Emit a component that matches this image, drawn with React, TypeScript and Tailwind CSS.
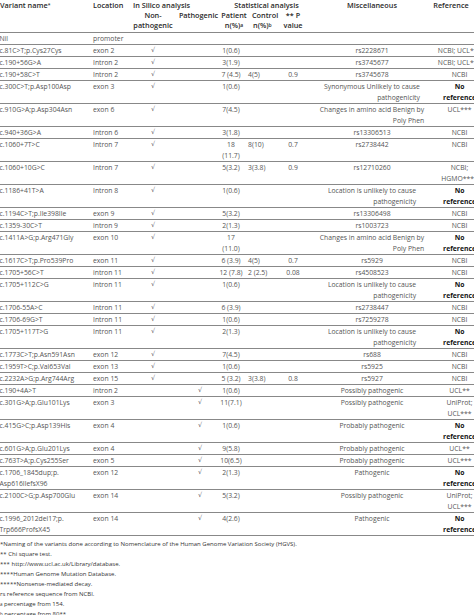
import React from "react";

type Cell = string | string[];

interface Variant {
  v: Cell;
  loc: string;
  np?: boolean;
  pa?: boolean;
  pt?: Cell;
  ct?: string;
  p?: string;
  misc?: Cell;
  ref?: Cell | "NOREF";
}

const UNLIKELY = ["Location is unlikely to cause", "pathogenicity"];
const BENIGN = ["Changes in amino acid Benign by", "Poly Phen"];

const rows: Variant[] = [
  { v: "Nil", loc: "promoter" },
  { v: "c.81C>T;p.Cys27Cys", loc: "exon 2", np: true, pt: "1(0.6)", misc: "rs2228671", ref: "NCBI; UCL***" },
  { v: "c.190+56G>A", loc: "Intron 2", np: true, pt: "3(1.9)", misc: "rs3745677", ref: "NCBI; UCL***" },
  { v: "c.190+58C>T", loc: "Intron 2", np: true, pt: "7 (4.5)", ct: "4(5)", p: "0.9", misc: "rs3745678", ref: "NCBI" },
  { v: "c.300C>T;p.Asp100Asp", loc: "exon 3", np: true, pt: "1(0.6)", misc: ["Synonymous Unlikely to cause", "pathogenicity"], ref: "NOREF" },
  { v: "c.910G>A;p.Asp304Asn", loc: "exon 6", np: true, pt: "7(4.5)", misc: BENIGN, ref: "UCL***" },
  { v: "c.940+36G>A", loc: "Intron 6", np: true, pt: "3(1.8)", misc: "rs13306513", ref: "NCBI" },
  { v: "c.1060+7T>C", loc: "Intron 7", np: true, pt: ["18", "(11.7)"], ct: "8(10)", p: "0.7", misc: "rs2738442", ref: "NCBI" },
  { v: "c.1060+10G>C", loc: "Intron 7", np: true, pt: "5(3.2)", ct: "3(3.8)", p: "0.9", misc: "rs12710260", ref: ["NCBI;", "HGMO****"] },
  { v: "c.1186+41T>A", loc: "Intron 8", np: true, pt: "1(0.6)", misc: UNLIKELY, ref: "NOREF" },
  { v: "c.1194C>T;p.Ile398Ile", loc: "exon 9", np: true, pt: "5(3.2)", misc: "rs13306498", ref: "NCBI" },
  { v: "c.1359-30C>T", loc: "intron 9", np: true, pt: "2(1.3)", misc: "rs1003723", ref: "NCBI" },
  { v: "c.1411A>G;p.Arg471Gly", loc: "exon 10", np: true, pt: ["17", "(11.0)"], misc: BENIGN, ref: "NOREF" },
  { v: "c.1617C>T;p.Pro539Pro", loc: "exon 11", np: true, pt: "6 (3.9)", ct: "4(5)", p: "0.7", misc: "rs5929", ref: "NCBI" },
  { v: "c.1705+56C>T", loc: "intron 11", np: true, pt: "12 (7.8)", ct: "2 (2.5)", p: "0.08", misc: "rs4508523", ref: "NCBI" },
  { v: "c.1705+112C>G", loc: "intron 11", np: true, pt: "1(0.6)", misc: UNLIKELY, ref: "NOREF" },
  { v: "c.1706-55A>C", loc: "Intron 11", np: true, pt: "6 (3.9)", misc: "rs2738447", ref: "NCBI" },
  { v: "c.1706-69G>T", loc: "Intron 11", np: true, pt: "1(0.6)", misc: "rs7259278", ref: "NCBI" },
  { v: "c.1705+117T>G", loc: "Intron 11", np: true, pt: "2(1.3)", misc: UNLIKELY, ref: "NOREF" },
  { v: "c.1773C>T;p.Asn591Asn", loc: "exon 12", np: true, pt: "7(4.5)", misc: "rs688", ref: "NCBI" },
  { v: "c.1959T>C;p.Val653Val", loc: "exon 13", np: true, pt: "1(0.6)", misc: "rs5925", ref: "NCBI" },
  { v: "c.2232A>G;p.Arg744Arg", loc: "exon 15", np: true, pt: "5 (3.2)", ct: "3(3.8)", p: "0.8", misc: "rs5927", ref: "NCBI" },
  { v: "c.190+4A>T", loc: "intron 2", pa: true, pt: "1(0.6)", misc: "Possibly pathogenic", ref: "UCL**" },
  { v: "c.301G>A;p.Glu101Lys", loc: "exon 3", pa: true, pt: "11(7.1)", misc: "Possibly pathogenic", ref: ["UniProt;", "UCL***"] },
  { v: "c.415G>C;p.Asp139His", loc: "exon 4", pa: true, pt: "1(0.6)", misc: "Probably pathogenic", ref: "NOREF" },
  { v: "c.601G>A;p.Glu201Lys", loc: "exon 4", pa: true, pt: "9(5.8)", misc: "Probably pathogenic", ref: "UCL**" },
  { v: "c.763T>A;p.Cys255Ser", loc: "exon 5", pa: true, pt: "10(6.5)", misc: "Probably pathogenic", ref: "UCL***" },
  { v: ["c.1706_1845dup;p.", "Asp616IlefsX96"], loc: "exon 12", pa: true, pt: "2(1.3)", misc: "Pathogenic", ref: "NOREF" },
  { v: "c.2100C>G;p.Asp700Glu", loc: "exon 14", pa: true, pt: "5(3.2)", misc: "Possibly pathogenic", ref: ["UniProt;", "UCL***"] },
  { v: ["c.1996_2012del17;p.", "Trp666ProfsX45"], loc: "exon 14", pa: true, pt: "4(2.6)", misc: "Pathogenic", ref: "NOREF" },
];

const notes = [
  "*Naming of the variants done according to Nomenclature of the Human Genome Variation Society (HGVS).",
  "** Chi square test.",
  "*** http://www.ucl.ac.uk/Library/database.",
  "****Human Genome Mutation Database.",
  "*****Nonsense-mediated decay.",
  "rs reference sequence from NCBI.",
];

const cols = "grid grid-cols-[93px_40px_40px_48px_26px_38px_27px_120px_62px]";

function Lines({ value }: { value?: Cell }) {
  if (!value) return null;
  const list = Array.isArray(value) ? value : [value];
  return (
    <>
      {list.map((line) => (
        <div key={line} className="h-[11px] whitespace-nowrap">
          {line}
        </div>
      ))}
    </>
  );
}

function Check() {
  return <div className="h-[11px] font-['DejaVu_Sans',sans-serif] text-[6.5px] leading-[11px]">√</div>;
}

function Header() {
  return (
    <div className="h-[33px] overflow-hidden border-b border-[#888] text-[7.3px] font-semibold text-[#2a2a2a]">
      <div className={`${cols} h-[10px] leading-[10px]`}>
        <div className="whitespace-nowrap">
          Variant name<span className="text-[5px] align-top">*</span>
        </div>
        <div>Location</div>
        <div className="col-span-2 whitespace-nowrap">In Silico analysis</div>
        <div className="col-span-3 text-center whitespace-nowrap">Statistical analysis</div>
        <div className="text-center">Miscellaneous</div>
        <div className="pr-[24px] text-center">Reference</div>
      </div>
      <div className={`${cols} h-[22px] leading-[10px]`}>
        <div />
        <div />
        <div className="text-center">
          <div className="h-[10px]">Non-</div>
          <div className="h-[10px]">pathogenic</div>
        </div>
        <div className="flex justify-center pl-[3px]">Pathogenic</div>
        <div className="flex justify-center pl-[2px] pr-[2px]">
          <div className="text-center whitespace-nowrap">
            <div className="h-[10px]">Patient</div>
            <div className="h-[10px]">
              n(%)<span className="text-[5px] align-top">a</span>
            </div>
          </div>
        </div>
        <div className="pl-[5px] whitespace-nowrap">
          <div className="h-[10px]">Control</div>
          <div className="h-[10px] pl-[1px]">
            n(%)<span className="text-[5px] align-top">b</span>
          </div>
        </div>
        <div className="flex justify-center pr-[11px]">
          <div className="text-center whitespace-nowrap">
            <div className="h-[10px]">** P</div>
            <div className="h-[10px]">value</div>
          </div>
        </div>
        <div />
        <div />
      </div>
    </div>
  );
}

function DataRow({ row }: { row: Variant }) {
  return (
    <div className={`${cols} border-b border-[#888] text-[6.8px] leading-[11px] text-[#555]`}>
      <div className="-ml-[0.5px]">
        <Lines value={row.v} />
      </div>
      <div className="h-[11px] whitespace-nowrap">{row.loc}</div>
      <div className="flex justify-center">{row.np && <Check />}</div>
      <div className="flex justify-center pl-[6px]">{row.pa && <Check />}</div>
      <div className="flex justify-center pr-[6px]">
        <div className="text-center">
          <Lines value={row.pt} />
        </div>
      </div>
      <div className="h-[11px] pl-[1px] whitespace-nowrap">{row.ct}</div>
      <div className="flex h-[11px] justify-center pr-[11px] whitespace-nowrap">{row.p}</div>
      <div className="flex justify-center">
        <div className="text-right">
          <Lines value={row.misc} />
        </div>
      </div>
      <div className="flex justify-center pr-[7px]">
        {row.ref === "NOREF" ? (
          <div className="text-center font-bold text-[#111]">
            <div className="h-[11px]">No</div>
            <div className="h-[11px]">reference</div>
          </div>
        ) : (
          <div className="text-center">
            <Lines value={row.ref} />
          </div>
        )}
      </div>
    </div>
  );
}

export default function App() {
  return (
    <div className="h-[615px] w-[474px] overflow-hidden bg-white font-['Open_Sans',sans-serif]">
      <div className="w-[494px]">
        <Header />
        {rows.map((row, i) => (
          <DataRow key={i} row={row} />
        ))}
      </div>
      <div className="mt-[3px] text-[6px] leading-[10px] text-[#333]">
        {notes.map((n) => (
          <div key={n} className="h-[10px] whitespace-nowrap">
            {n}
          </div>
        ))}
        <div className="h-[10px]">
          <span className="text-[4.5px] align-top">a</span> percentage from 154.
        </div>
        <div className="h-[10px]">
          <span className="text-[4.5px] align-top">b</span> percentage from 80**.
        </div>
      </div>
    </div>
  );
}
